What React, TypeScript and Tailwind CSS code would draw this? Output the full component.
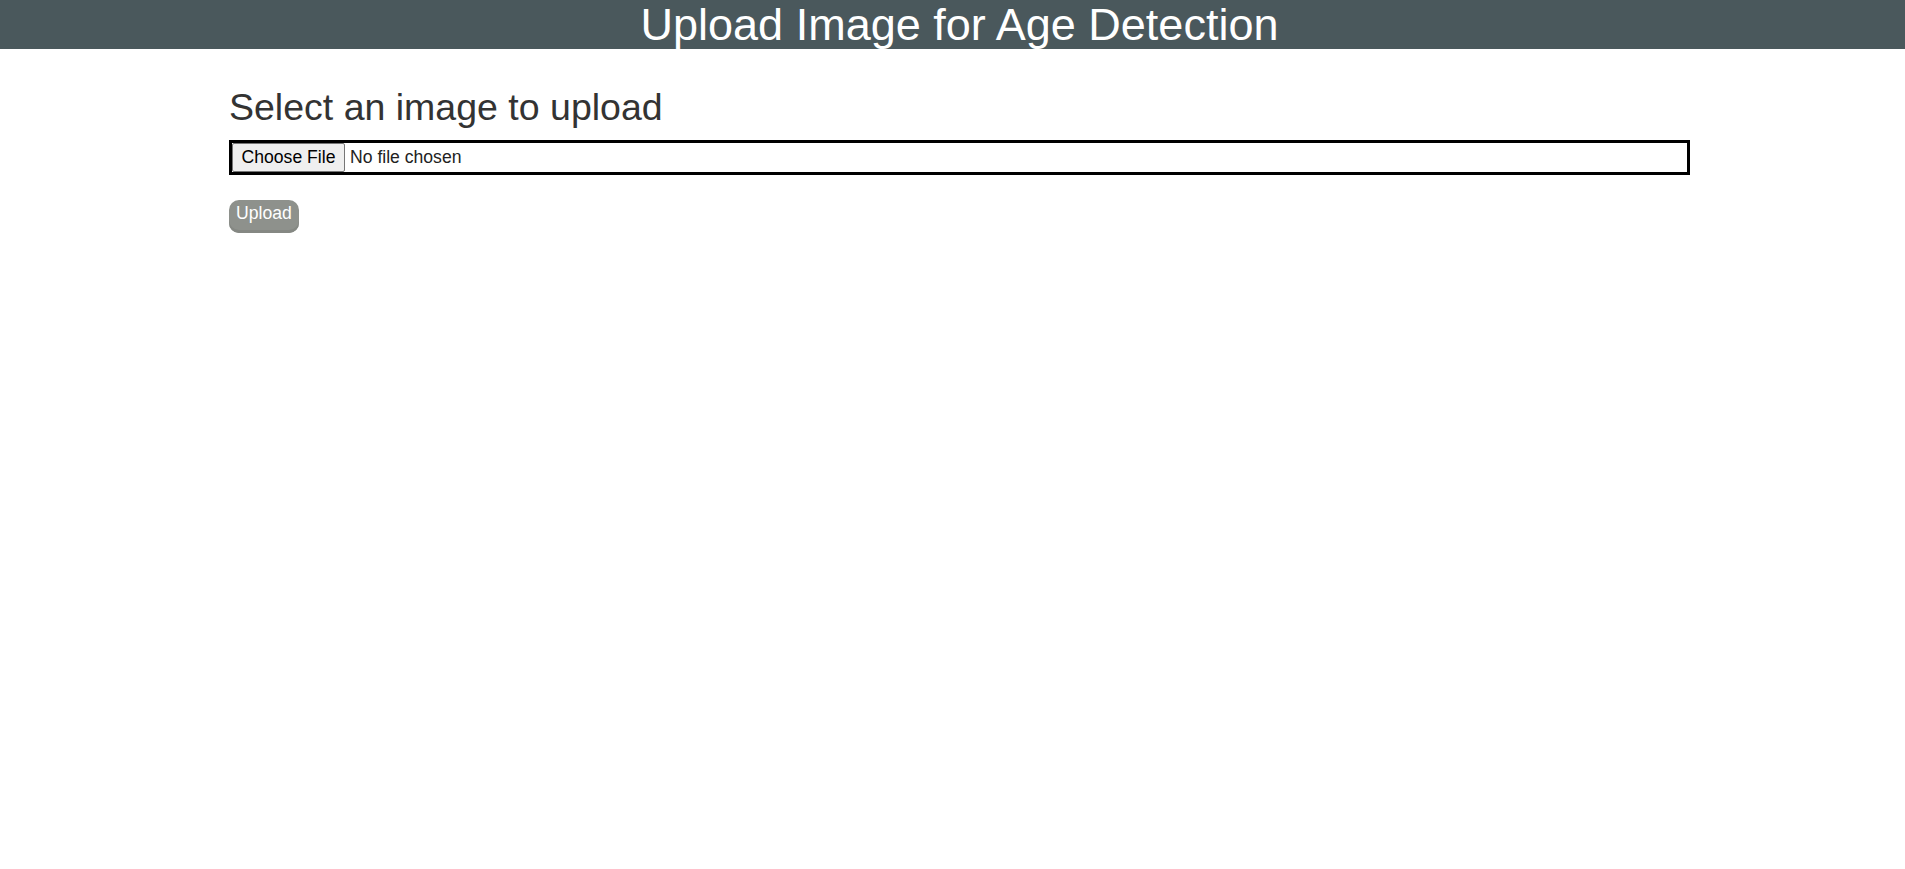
import { useState } from "react";

export default function App() {
  const [fileName, setFileName] = useState<string | null>(null);

  return (
    <div className="min-h-screen bg-white font-['Liberation_Sans',Arial,sans-serif] text-[#222]">
      {/* Header */}
      <header className="h-[49px] bg-[#4a585c] pl-[14px] text-center">
        <h1 className="text-[45px] leading-[49px] font-normal text-white">
          Upload Image for Age Detection
        </h1>
      </header>

      {/* Upload form */}
      <main className="ml-[229px] w-[1461px] pt-[37px]">
        <h2 className="text-[37.5px] leading-[43px] font-normal text-[#333]">
          Select an image to upload
        </h2>

        <form onSubmit={(e) => e.preventDefault()} className="mt-[11px]">
          <label className="flex h-[35px] w-full cursor-pointer items-center border-[3px] border-black bg-white">
            <input
              type="file"
              accept="image/*"
              className="sr-only"
              onChange={(e) => setFileName(e.target.files?.[0]?.name ?? null)}
            />
            <span className="flex h-full w-[113px] items-center justify-center rounded-[2px] border border-[#767676] bg-[#efefef] text-[17.6px] leading-none text-black">
              Choose File
            </span>
            <span className="ml-[5px] text-[17.6px] leading-none text-[#222]">
              {fileName ?? "No file chosen"}
            </span>
          </label>

          <button
            type="submit"
            className="mt-[25px] h-[33px] w-[70px] rounded-[10px] bg-[#8e918c] pb-[6px] text-[17.6px] leading-none text-white shadow-[inset_0_-3px_0_#858883]"
          >
            Upload
          </button>
        </form>
      </main>
    </div>
  );
}
